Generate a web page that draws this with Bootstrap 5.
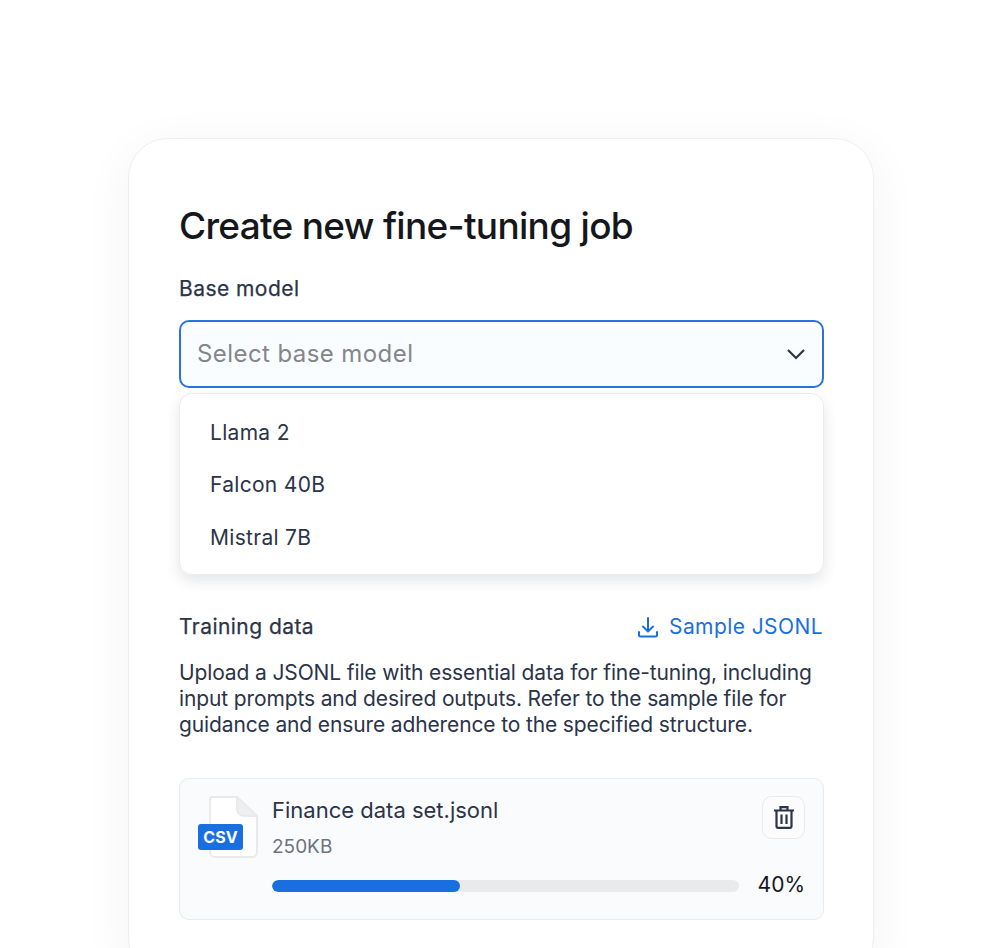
<!DOCTYPE html>
<html lang="en">
<head>
  <meta charset="UTF-8">
  <meta name="viewport" content="width=device-width, initial-scale=1.0">
  <title>Create new fine-tuning job</title>
  <link href="https://cdn.jsdelivr.net/npm/bootstrap@5.3.3/dist/css/bootstrap.min.css" rel="stylesheet">
  <style>
    html, body { height: 948px; overflow: hidden; }
    body { font-family: Inter, "Liberation Sans", sans-serif; background: #fff; color: #2b3448; }
    .job-page { padding-top: 138px; }
    .job-card { width: 746px; height: 840px; margin-left: 128px; padding: 63px 49px 0 50px; background: #fff; border: 1px solid #efefef; border-radius: 40px; box-shadow: 0 10px 50px rgba(30, 40, 60, .05); }
    .job-title { font-size: 37px; line-height: 48px; font-weight: 500; letter-spacing: -.7px; color: #15171c; margin-bottom: 25px; }
    .job-label { font-size: 21px; line-height: 28px; font-weight: 400; letter-spacing: .45px; color: #2b3448; -webkit-text-stroke: .25px #2b3448; }
    .select-box { height: 68px; margin-top: 17px; padding: 0 16px; background: #fafdff; border: 2px solid #2a73dc; border-radius: 10px; font-size: 24px; letter-spacing: .42px; color: #85868a; }
    .model-menu { height: 182px; margin-top: 5px; padding: 12px 30px; border: 1px solid #ececee; border-radius: 13px; box-shadow: 0 6px 14px rgba(30, 40, 60, .12); font-size: 21px; letter-spacing: .3px; }
    .model-item { height: 52.5px; color: #2b3448; }
    .train-head { margin-top: 36px; }
    .sample-link { font-size: 21px; letter-spacing: .42px; color: #1a6fe0; gap: 9px; margin-right: 1px; }
    .train-text { font-size: 21px; line-height: 26.3px; letter-spacing: -.13px; margin: 17px 0 0; color: #2b3448; }
    .file-box { height: 142px; margin-top: 40px; padding: 17px 18px 0; background: #fafbfd; border: 1px solid #e9eaec; border-radius: 10px; }
    .file-icon { width: 60px; height: 62px; margin-right: 14px; position: relative; flex: none; }
    .csv-tag { position: absolute; left: 0; top: 28px; width: 45px; height: 26px; background: #1a6fe0; color: #fff; border-radius: 3px; font-size: 16px; font-weight: 700; line-height: 26px; text-align: center; }
    .file-name { font-size: 22px; line-height: 28px; }
    .file-size { font-size: 19px; line-height: 24px; margin-top: 11px; color: #6b7280; }
    .trash-btn { width: 43px; height: 43px; background: #fcfcfd; border: 1px solid #e9eaec; border-radius: 10px; }
    .file-row { margin-top: 12px; }
    .file-bar { height: 12px; margin-top: 1px; background: #e9eaec; border-radius: 6px; width: 467px; }
    .file-bar .progress-bar { background: #1a6fe0; border-radius: 6px; }
    .file-pct { font-size: 21px; line-height: 28px; color: #15171c; }
  </style>
</head>
<body>
  <div class="job-page">
    <div class="job-card">
      <h1 class="job-title">Create new fine-tuning job</h1>
      <div class="job-label">Base model</div>
      <div class="select-box d-flex align-items-center justify-content-between">
        <span>Select base model</span>
        <svg width="20" height="12" viewBox="0 0 20 12" fill="none" stroke="#2b3448" stroke-width="2.2"><path d="M2 2l8 8 8-8"/></svg>
      </div>
      <div class="model-menu">
        <div class="model-item d-flex align-items-center">Llama 2</div>
        <div class="model-item d-flex align-items-center">Falcon 40B</div>
        <div class="model-item d-flex align-items-center">Mistral 7B</div>
      </div>
      <div class="train-head d-flex justify-content-between align-items-center">
        <div class="job-label">Training data</div>
        <a class="sample-link d-flex align-items-center text-decoration-none" href="#">
          <svg width="24" height="24" viewBox="0 0 24 24" fill="none" stroke="#1a6fe0" stroke-width="2" stroke-linecap="round" stroke-linejoin="round"><path d="M12 3v13M7 11.500l5 5 5-5M3 17v3a1.500 1.500 0 0 0 1.500 1.500h15A1.500 1.500 0 0 0 21 20v-3"/></svg>
          Sample JSONL
        </a>
      </div>
      <p class="train-text">Upload a JSONL file with essential data for fine-tuning, including input prompts and desired outputs. Refer to the sample file for guidance and ensure adherence to the specified structure.</p>
      <div class="file-box d-flex">
        <div class="file-icon">
          <svg class="position-absolute top-0 end-0" width="50" height="62" viewBox="0 0 50 62" fill="#fff" stroke="#e9eaec" stroke-width="2" stroke-linejoin="round"><path d="M4 1h25l20 19v36a5 5 0 0 1-5 5H7a5 5 0 0 1-5-5V3a2 2 0 0 1 2-2z"/><path d="M29 1v12a7 7 0 0 0 7 7h13z" fill="#eeeff1"/></svg>
          <div class="csv-tag">CSV</div>
        </div>
        <div class="flex-grow-1">
          <div class="d-flex justify-content-between">
            <div>
              <div class="file-name">Finance data set.jsonl</div>
              <div class="file-size">250KB</div>
            </div>
            <div class="trash-btn d-flex align-items-center justify-content-center">
              <svg width="20" height="23" viewBox="0 0 20 23" fill="none" stroke="#2b3448" stroke-width="2.2"><path d="M0 4.500h20M6.500 4.500V1.200h7v3.300M2.500 4.500v16a1.300 1.300 0 0 0 1.300 1.300h12.400a1.300 1.300 0 0 0 1.300-1.300v-16M7.500 8.500v9.500M12.500 8.500v9.500"/></svg>
            </div>
          </div>
          <div class="d-flex justify-content-between align-items-center file-row">
            <div class="progress file-bar"><div class="progress-bar" style="width: 40.300%"></div></div>
            <div class="file-pct">40%</div>
          </div>
        </div>
      </div>
    </div>
  </div>
  <script src="https://cdn.jsdelivr.net/npm/bootstrap@5.3.3/dist/js/bootstrap.bundle.min.js"></script>
</body>
</html>
